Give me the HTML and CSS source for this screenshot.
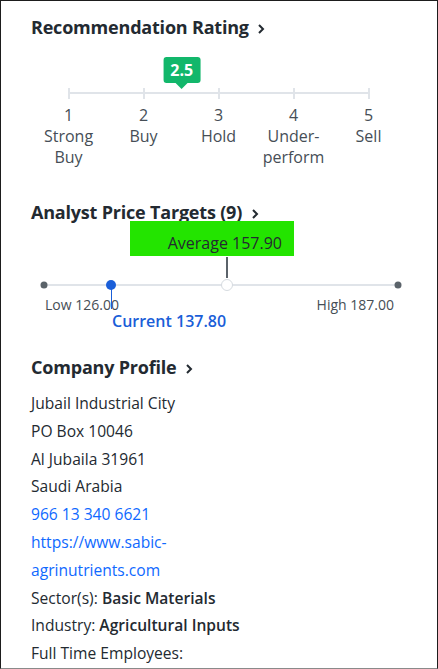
FILE: index.html
```html
<!DOCTYPE html>
<html lang="en">
<head>
    <meta charset="UTF-8">
    <meta name="viewport" content="width=device-width, initial-scale=1.0">
    <title>SABIC Agri-Nutrients - Analysis</title>
    <link rel="stylesheet" href="styles.css">
</head>
<body>
    <div class="frame">
        <section class="rating">
            <h2 class="title">Recommendation Rating <svg class="chev" viewBox="0 0 10 12"><path d="M3 2l4 4-4 4"/></svg></h2>
            <div class="scale">
                <div class="badge" style="left: 40.2%;">2.5</div>
                <div class="track">
                    <span class="tick"></span><span class="tick"></span><span class="tick"></span><span class="tick"></span><span class="tick"></span>
                </div>
                <div class="labels">
                    <div>1<br>Strong<br>Buy</div>
                    <div>2<br>Buy</div>
                    <div>3<br>Hold</div>
                    <div>4<br>Under-<br>perform</div>
                    <div>5<br>Sell</div>
                </div>
            </div>
        </section>

        <section class="targets">
            <h2 class="title">Analyst Price Targets (9) <svg class="chev" viewBox="0 0 10 12"><path d="M3 2l4 4-4 4"/></svg></h2>
            <div class="chart">
                <div class="avg-box">Average 157.90</div>
                <div class="line">
                    <span class="avg-stem" style="left: 51.7%;"></span>
                    <span class="dot end" style="left: 0%;"></span>
                    <span class="dot end" style="left: 100%;"></span>
                    <span class="dot avg" style="left: 51.7%;"></span>
                    <span class="cur-stem" style="left: 19%;"></span>
                    <span class="dot cur" style="left: 19%;"></span>
                </div>
                <div class="ends">
                    <span>Low 126.00</span>
                    <span>High 187.00</span>
                </div>
                <div class="current">Current 137.80</div>
            </div>
        </section>

        <section class="profile">
            <h2 class="title">Company Profile <svg class="chev" viewBox="0 0 10 12"><path d="M3 2l4 4-4 4"/></svg></h2>
            <p>Jubail Industrial City</p>
            <p>PO Box 10046</p>
            <p>Al Jubaila 31961</p>
            <p>Saudi Arabia</p>
            <p><a href="#">966 13 340 6621</a></p>
            <p class="url"><a href="#">https://www.sabic-<br>agrinutrients.com</a></p>
            <p>Sector(s): <b>Basic Materials</b></p>
            <p>Industry: <b>Agricultural Inputs</b></p>
            <p>Full Time Employees:</p>
        </section>
    </div>
</body>
</html>
```

FILE: styles.css
```css
* {
    box-sizing: border-box;
}
body {
    margin: 0;
    font-family: "Open Sans", "Noto Sans", sans-serif;
    color: #232a31;
    background: #fff;
}
.frame {
    width: 438px;
    height: 669px;
    overflow: hidden;
    border: 1px solid #1d1d1d;
    border-bottom-color: #8a8a8a;
    padding: 13px 0 0 30px;
}
.title {
    margin: 0;
    font-size: 18px;
    font-weight: 700;
    line-height: 26px;
    letter-spacing: -0.2px;
    color: #232a31;
}
.chev {
    width: 10px;
    height: 12px;
    margin-left: 3px;
    vertical-align: -1px;
}
.chev path {
    fill: none;
    stroke: #232a31;
    stroke-width: 2;
}

/* recommendation rating */
.scale {
    position: relative;
    width: 375px;
    margin-top: 17px;
    padding-top: 31px;
}
.badge {
    position: absolute;
    top: 0;
    transform: translateX(-50%);
    background: #12b76b;
    color: #fff;
    font-weight: 700;
    font-size: 16px;
    line-height: 26px;
    padding: 0 7px;
    border-radius: 3px;
}
.badge::after {
    content: "";
    position: absolute;
    left: 50%;
    bottom: -6px;
    margin-left: -6px;
    border: 6px solid transparent;
    border-bottom: 0;
    border-top-color: #12b76b;
}
.track {
    display: flex;
    justify-content: space-between;
    margin: 0 37px 0 38px;
    height: 11px;
    background: linear-gradient(#e0e4e9, #e0e4e9) 0 4px / 100% 2px no-repeat;
}
.tick {
    width: 2px;
    height: 11px;
    margin-left: -1px;
    background: #e0e4e9;
}
.tick:last-child {
    margin-right: -1px;
}
.labels {
    display: grid;
    grid-template-columns: repeat(5, 75px);
    margin-top: 6px;
    text-align: center;
    font-size: 16px;
    line-height: 21px;
    color: #464e56;
}

/* price targets */
.targets {
    margin-top: 31px;
}
.chart {
    position: relative;
    width: 354px;
    margin-left: 13px;
    padding-top: 59px;
}
.avg-box {
    position: absolute;
    left: 86px;
    top: -4px;
    width: 164px;
    height: 35px;
    padding: 12px 12px 0 0;
    background: #23e400;
    text-align: right;
    font-size: 16px;
    line-height: 20px;
    color: #232a31;
}
.line {
    position: relative;
    height: 2px;
    background: #e0e4e9;
}
.dot {
    position: absolute;
    top: 1px;
    border-radius: 50%;
    transform: translate(-50%, -50%);
}
.dot.end {
    width: 7px;
    height: 7px;
    background: #5b636a;
}
.dot.cur {
    width: 10px;
    height: 10px;
    background: #1a5ed8;
}
.dot.avg {
    width: 12px;
    height: 12px;
    background: #fff;
    border: 1px solid #d6dbe0;
}
.avg-stem {
    position: absolute;
    bottom: 8px;
    width: 2px;
    height: 21px;
    margin-left: -1px;
    background: #5b636a;
}
.cur-stem {
    position: absolute;
    top: 0;
    width: 1px;
    height: 25px;
    background: #1a5ed8;
}
.ends {
    display: flex;
    justify-content: space-between;
    margin: 9px 4px 0 1px;
    font-size: 14px;
    line-height: 20px;
    color: #464e56;
}
.current {
    margin: -4px 0 0 68px;
    font-size: 16px;
    line-height: 20px;
    font-weight: 600;
    color: #1a5ed8;
}

/* company profile */
.profile {
    margin-top: 23px;
}
.profile .title {
    margin-bottom: 10px;
}
.profile p {
    margin: 0;
    font-size: 15.6px;
    line-height: 27.8px;
}
.profile a {
    color: #0f69ff;
    text-decoration: none;
}
.profile b {
    font-weight: 600;
}
```
